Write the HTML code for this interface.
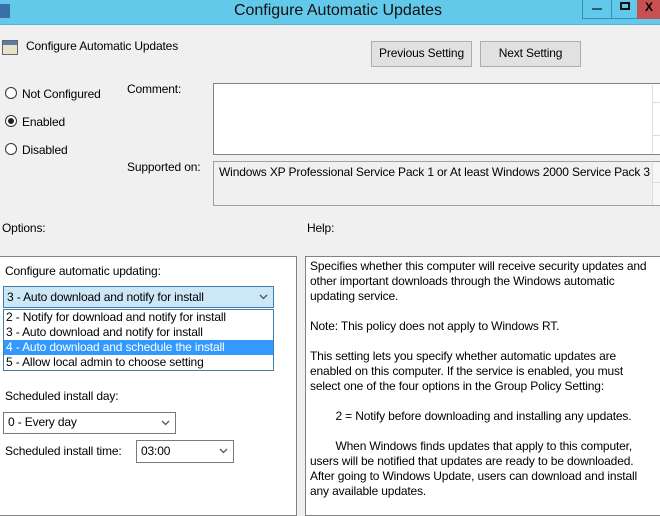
<!DOCTYPE html>
<html><head><style>
*{margin:0;padding:0;box-sizing:border-box}
body{width:660px;height:507px;overflow:hidden;background:#f0f0f0;font-family:"Liberation Sans",sans-serif;font-size:12px;color:#000;position:relative;letter-spacing:-0.15px}
.a{position:absolute;white-space:nowrap}
.btn{position:absolute;background:#e1e1e1;border:1px solid #adadad;text-align:center;line-height:23px}
.rad{position:absolute;width:12px;height:12px;border:1px solid #333;border-radius:50%;background:#fff}
.sel{position:absolute;background:#fff;border:1px solid #7a7a7a;padding-left:4px;line-height:19px}
.chev{position:absolute;right:5px;top:7px;width:9px;height:6px}
</style></head><body>
<div class="a" style="left:0;top:0;width:660px;height:25px;background:#63c9ea;border-bottom:1px solid #59b4d2"></div>
<div class="a" style="left:0;top:4px;width:10px;height:14px;background:#3a6fa8"></div>
<div class="a" style="left:8px;top:2px;width:660px;text-align:center;font-size:16px;color:#111;letter-spacing:0">Configure Automatic Updates</div>
<div class="a" style="left:582px;top:0;width:30px;height:19px;border:1px solid #3b8fb0;border-top:none;background:#63c9ea"><div class="a" style="left:9px;top:8px;width:10px;height:2px;background:#2c5f74"></div></div>
<div class="a" style="left:611px;top:0;width:27px;height:19px;border:1px solid #3b8fb0;border-top:none;background:#63c9ea"><div class="a" style="left:8px;top:2px;width:10px;height:8px;border:2px solid #111"></div></div>
<div class="a" style="left:637px;top:0;width:23px;height:19px;background:#c75050;color:#000;font-weight:bold;font-size:12px;padding-left:8px">X</div>

<div class="a" style="left:2px;top:40px;width:16px;height:15px;border:1px solid #666;background:#e9e2c8"><div style="height:4px;background:#5a7da8"></div></div>
<div class="a" style="left:26px;top:39px">Configure Automatic Updates</div>
<div class="btn" style="left:371px;top:41px;width:101px;height:26px">Previous Setting</div>
<div class="btn" style="left:480px;top:41px;width:101px;height:26px">Next Setting</div>

<div class="rad" style="left:5px;top:87px"></div><div class="a" style="left:22px;top:87px">Not Configured</div>
<div class="rad" style="left:5px;top:115px"><div style="position:absolute;left:2px;top:2px;width:6px;height:6px;border-radius:50%;background:#222"></div></div><div class="a" style="left:22px;top:115px">Enabled</div>
<div class="rad" style="left:5px;top:143px"></div><div class="a" style="left:22px;top:143px">Disabled</div>

<div class="a" style="left:127px;top:82px">Comment:</div>
<div class="a" style="left:213px;top:83px;width:450px;height:72px;background:#fff;border:1px solid #828282"></div>
<div class="a" style="left:652px;top:85px;width:10px;height:68px;border-left:1px solid #ddd;background:#fff"><div style="height:18px;border-bottom:1px solid #ddd"></div><div style="position:absolute;bottom:0;width:10px;height:18px;border-top:1px solid #ddd"></div></div>
<div class="a" style="left:127px;top:160px">Supported on:</div>
<div class="a" style="left:213px;top:161px;width:450px;height:45px;border:1px solid #a0a0a0"></div>
<div class="a" style="left:219px;top:165px">Windows XP Professional Service Pack 1 or At least Windows 2000 Service Pack 3</div>
<div class="a" style="left:652px;top:163px;width:10px;height:42px;border-left:1px solid #ddd;background:#f7f7f7"><div style="height:20px;border-bottom:1px solid #ddd"></div></div>

<div class="a" style="left:2px;top:221px">Options:</div>
<div class="a" style="left:307px;top:221px">Help:</div>

<div class="a" style="left:-1px;top:256px;width:298px;height:260px;background:#fff;border:1px solid #828282"></div>
<div class="a" style="left:5px;top:264px">Configure automatic updating:</div>
<div class="sel" style="left:3px;top:286px;width:271px;height:22px;background:#cce8f7;border-color:#3c7fb1;line-height:20px;padding-left:3px">3 - Auto download and notify for install<svg class="chev" viewBox="0 0 9 6"><path d="M1 1l3.5 3.5L8 1" fill="none" stroke="#555" stroke-width="1.3"/></svg></div>
<div class="a" style="left:4px;top:355px;width:12px;height:14px;border:1px solid #888"></div>
<div class="a" style="left:3px;top:309px;width:271px;height:62px;background:#fff;border:1px solid #3c7fb1;line-height:15px">
<div style="padding-left:2px">2 - Notify for download and notify for install</div>
<div style="padding-left:2px">3 - Auto download and notify for install</div>
<div style="padding-left:2px;background:#3399ff;color:#fff">4 - Auto download and schedule the install</div>
<div style="padding-left:2px">5 - Allow local admin to choose setting</div>
</div>
<div class="a" style="left:5px;top:389px">Scheduled install day:</div>
<div class="sel" style="left:3px;top:412px;width:173px;height:22px">0 - Every day<svg class="chev" viewBox="0 0 9 6"><path d="M1 1l3.5 3.5L8 1" fill="none" stroke="#555" stroke-width="1.3"/></svg></div>
<div class="a" style="left:5px;top:444px">Scheduled install time:</div>
<div class="sel" style="left:136px;top:440px;width:98px;height:23px;line-height:21px">03:00<svg class="chev" viewBox="0 0 9 6"><path d="M1 1l3.5 3.5L8 1" fill="none" stroke="#555" stroke-width="1.3"/></svg></div>

<div class="a" style="left:305px;top:256px;width:360px;height:260px;background:#fff;border:1px solid #828282"></div>
<div class="a" style="left:310px;top:259px;line-height:15px;white-space:pre">Specifies whether this computer will receive security updates and
other important downloads through the Windows automatic
updating service.

Note: This policy does not apply to Windows RT.

This setting lets you specify whether automatic updates are
enabled on this computer. If the service is enabled, you must
select one of the four options in the Group Policy Setting:

        2 = Notify before downloading and installing any updates.

        When Windows finds updates that apply to this computer,
users will be notified that updates are ready to be downloaded.
After going to Windows Update, users can download and install
any available updates.</div>
</body></html>
